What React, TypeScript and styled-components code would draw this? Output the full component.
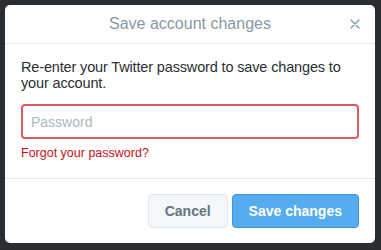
import styled, { createGlobalStyle } from 'styled-components';

const GlobalStyle = createGlobalStyle`
  html, body {
    margin: 0;
    padding: 0;
    background: #2b2e31;
  }
  body {
    font-family: "Liberation Sans", Arial, sans-serif;
  }
`;

const Page = styled.div`
  width: 381px;
  height: 250px;
  padding: 5px 6px 7px 5px;
  box-sizing: border-box;
`;

const Dialog = styled.div`
  width: 370px;
  height: 238px;
  background: #fff;
  border-radius: 5px;
  display: flex;
  flex-direction: column;
  overflow: hidden;
`;

const Header = styled.div`
  position: relative;
  height: 38px;
  border-bottom: 1px solid #e1e8ed;
  display: flex;
  align-items: center;
  justify-content: center;
`;

const Title = styled.h3`
  margin: 0;
  font-size: 16px;
  font-weight: 400;
  color: #8899a6;
`;

const Close = styled.button`
  position: absolute;
  right: 13px;
  top: 12px;
  width: 14px;
  height: 14px;
  padding: 0;
  border: 0;
  background: none;
  display: flex;
  align-items: center;
  justify-content: center;
`;

const Body = styled.div`
  padding: 15px 16px 17px 16px;
  border-bottom: 1px solid #e1e8ed;
`;

const Message = styled.p`
  margin: 0 0 13px;
  font-size: 14.5px;
  letter-spacing: -0.15px;
  line-height: 16px;
  color: #292f33;
`;

const Input = styled.input`
  display: block;
  width: 338px;
  height: 35px;
  box-sizing: border-box;
  border: 2px solid #e0595c;
  border-radius: 4px;
  padding: 0 8px;
  font-family: inherit;
  font-size: 14px;
  color: #292f33;
  outline: none;
  &::placeholder {
    color: #aab8c2;
  }
`;

const Forgot = styled.a`
  display: block;
  margin-top: 6px;
  font-size: 12.5px;
  line-height: 16px;
  color: #c8101a;
  text-decoration: none;
`;

const Footer = styled.div`
  flex: 1;
  display: flex;
  justify-content: flex-end;
  align-items: flex-start;
  gap: 4px;
  padding: 15px 16px 0 0;
`;

const Button = styled.button<{ $primary?: boolean }>`
  height: 34px;
  padding: 0 16px;
  border-radius: 4px;
  font-family: inherit;
  font-size: 14px;
  font-weight: 700;
  border: 1px solid ${(p) => (p.$primary ? '#3b94d9' : '#e1e8ed')};
  background: ${(p) => (p.$primary ? '#55acee' : '#f5f8fa')};
  color: ${(p) => (p.$primary ? '#fff' : '#66757f')};
`;

export default function App() {
  return (
    <>
      <GlobalStyle />
      <Page>
        <Dialog>
          <Header>
            <Title>Save account changes</Title>
            <Close aria-label="Close">
              <svg width="10" height="10" viewBox="0 0 10 10">
                <path d="M1 1L9 9M9 1L1 9" stroke="#8899a6" strokeWidth="1.4" strokeLinecap="round" />
              </svg>
            </Close>
          </Header>
          <Body>
            <Message>Re-enter your Twitter password to save changes to your account.</Message>
            <Input type="password" placeholder="Password" autoFocus />
            <Forgot href="#">Forgot your password?</Forgot>
          </Body>
          <Footer>
            <Button>Cancel</Button>
            <Button $primary>Save changes</Button>
          </Footer>
        </Dialog>
      </Page>
    </>
  );
}
